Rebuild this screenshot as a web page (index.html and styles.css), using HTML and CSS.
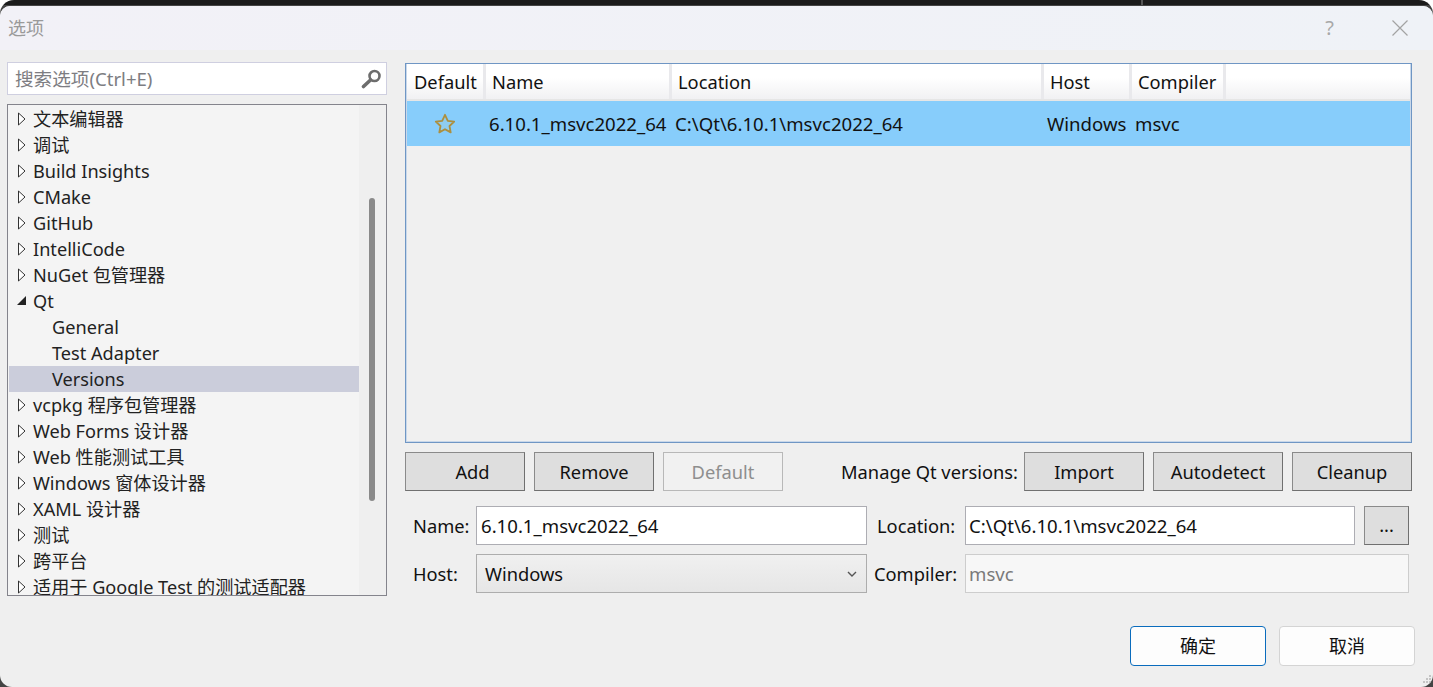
FILE: index.html
```html
<!DOCTYPE html>
<html lang="zh-CN">
<head>
<meta charset="utf-8">
<title>选项</title>
<link rel="stylesheet" href="styles.css">
</head>
<body>
<div class="frame">
  <div class="frame-tick"></div>
  <div class="window">
    <header class="titlebar">
      <span class="title">选项</span>
      <span class="help">?</span>
      <svg class="close" width="16" height="16" viewBox="0 0 16 16"><path d="M.5.5l15 15M15.500.5l-15 15" fill="none" stroke="#a3a3a3" stroke-width="1.200"/></svg>
    </header>
    <main class="content">
      <aside class="left">
        <div class="search">
          <span class="search-text">搜索选项(Ctrl+E)</span>
          <svg width="21" height="20" viewBox="0 0 21 20"><circle cx="13.500" cy="7" r="5" fill="none" stroke="#6d6d6d" stroke-width="2.600"/><path d="M9.500 11L2.500 17.500" stroke="#6d6d6d" stroke-width="3.600" stroke-linecap="round"/></svg>
        </div>
        <div class="tree">
          <div class="tree-list">
            <div class="node"><svg class="tri" viewBox="0 0 8 14"><path d="M.5 1v12l6.500-6z"/></svg>文本编辑器</div>
            <div class="node"><svg class="tri" viewBox="0 0 8 14"><path d="M.5 1v12l6.500-6z"/></svg>调试</div>
            <div class="node"><svg class="tri" viewBox="0 0 8 14"><path d="M.5 1v12l6.500-6z"/></svg>Build Insights</div>
            <div class="node"><svg class="tri" viewBox="0 0 8 14"><path d="M.5 1v12l6.500-6z"/></svg>CMake</div>
            <div class="node"><svg class="tri" viewBox="0 0 8 14"><path d="M.5 1v12l6.500-6z"/></svg>GitHub</div>
            <div class="node"><svg class="tri" viewBox="0 0 8 14"><path d="M.5 1v12l6.500-6z"/></svg>IntelliCode</div>
            <div class="node"><svg class="tri" viewBox="0 0 8 14"><path d="M.5 1v12l6.500-6z"/></svg>NuGet 包管理器</div>
            <div class="node"><svg class="tri-open" viewBox="0 0 10 14"><path d="M0 11h9V2z" fill="#222"/></svg>Qt</div>
            <div class="node child">General</div>
            <div class="node child">Test Adapter</div>
            <div class="node child selected">Versions</div>
            <div class="node"><svg class="tri" viewBox="0 0 8 14"><path d="M.5 1v12l6.500-6z"/></svg>vcpkg 程序包管理器</div>
            <div class="node"><svg class="tri" viewBox="0 0 8 14"><path d="M.5 1v12l6.500-6z"/></svg>Web Forms 设计器</div>
            <div class="node"><svg class="tri" viewBox="0 0 8 14"><path d="M.5 1v12l6.500-6z"/></svg>Web 性能测试工具</div>
            <div class="node"><svg class="tri" viewBox="0 0 8 14"><path d="M.5 1v12l6.500-6z"/></svg>Windows 窗体设计器</div>
            <div class="node"><svg class="tri" viewBox="0 0 8 14"><path d="M.5 1v12l6.500-6z"/></svg>XAML 设计器</div>
            <div class="node"><svg class="tri" viewBox="0 0 8 14"><path d="M.5 1v12l6.500-6z"/></svg>测试</div>
            <div class="node"><svg class="tri" viewBox="0 0 8 14"><path d="M.5 1v12l6.500-6z"/></svg>跨平台</div>
            <div class="node"><svg class="tri" viewBox="0 0 8 14"><path d="M.5 1v12l6.500-6z"/></svg>适用于 Google Test 的测试适配器</div>
          </div>
          <div class="scrollbar"><div class="thumb"></div></div>
        </div>
      </aside>
      <section class="right">
        <div class="table">
          <div class="thead">
            <div class="th w-default">Default</div>
            <div class="th w-name">Name</div>
            <div class="th w-location">Location</div>
            <div class="th w-host">Host</div>
            <div class="th w-compiler">Compiler</div>
            <div class="th w-rest"></div>
          </div>
          <div class="tr">
            <div class="td w-default star-cell">
              <svg width="22" height="22" viewBox="0 0 22 22"><path d="M11 1.800l2.800 6 6.400.8-4.700 4.400 1.200 6.400-5.700-3.200-5.700 3.200 1.200-6.400-4.700-4.400 6.400-.8z" fill="#8fcdf0" stroke="#ac8f3f" stroke-width="1.800" stroke-linejoin="round"/></svg>
            </div>
            <div class="td w-name">6.10.1_msvc2022_64</div>
            <div class="td w-location">C:\Qt\6.10.1\msvc2022_64</div>
            <div class="td w-host">Windows</div>
            <div class="td w-compiler">msvc</div>
          </div>
        </div>
        <div class="actions">
          <div class="btn add">Add</div>
          <div class="btn">Remove</div>
          <div class="btn disabled">Default</div>
          <span class="manage">Manage Qt versions:</span>
          <div class="btn">Import</div>
          <div class="btn wide">Autodetect</div>
          <div class="btn">Cleanup</div>
        </div>
        <div class="form">
          <div class="label l1">Name:</div>
          <div class="field">6.10.1_msvc2022_64</div>
          <div class="label l2">Location:</div>
          <div class="loc-wrap">
            <div class="field tight">C:\Qt\6.10.1\msvc2022_64</div>
            <div class="btn browse">...</div>
          </div>
          <div class="label l1">Host:</div>
          <div class="select">
            <span>Windows</span>
            <svg width="10" height="6" viewBox="0 0 10 6"><path d="M1 1l4 4 4-4" fill="none" stroke="#555" stroke-width="1.400"/></svg>
          </div>
          <div class="label l3">Compiler:</div>
          <div class="field tight readonly">msvc</div>
        </div>
      </section>
    </main>
    <footer class="footer">
      <div class="dlg primary">确定</div>
      <div class="dlg">取消</div>
    </footer>
    <svg class="grip" width="12" height="12" viewBox="0 0 12 12"><path d="M9 1h2v2H9zM6 4h2v2H6zM9 4h2v2H9zM3 7h2v2H3zM6 7h2v2H6zM9 7h2v2H9z" fill="#c4c4c4"/></svg>
  </div>
</div>
</body>
</html>
```
FILE: styles.css
```css
* { box-sizing: border-box; }
html, body { margin: 0; height: 100%; background: #fff; overflow: hidden; }
body { font: 18.3px/26px "Noto Sans", "Noto Sans CJK SC", sans-serif; color: #111; }
.frame { position: relative; height: 687px; background: linear-gradient(#1b1b1b 5px, #444 5px); border-radius: 14px 14px 0 0; padding-top: 6px; }
.frame-tick { position: absolute; left: 1141px; top: 0; width: 2px; height: 5px; background: #555; }
.window { position: relative; height: 681px; background: #efefef; border-radius: 10px 10px 12px 12px; overflow: hidden; }

.titlebar { height: 44px; display: flex; align-items: center; padding: 0 25px 0 8px; background: linear-gradient(90deg, #f2f1f7, #eff2f7); }
.title { flex: 1; color: #9a9a9a; font-size: 18px; }
.help { color: #a8a8a8; font-size: 20px; margin-right: 58px; }

.content { display: flex; padding: 12px 21px 0 7px; gap: 18px; }
.left { width: 380px; display: flex; flex-direction: column; gap: 9px; }
.search { height: 33px; display: flex; align-items: center; justify-content: space-between; padding: 0 4px 0 7px; background: #fff; border: 1px solid #cfcfe0; }
.search-text { color: #7d7d82; font-size: 18.6px; }

.tree { height: 492px; display: flex; border: 1px solid #84848c; background: #f4f4f4; overflow: hidden; font-size: 18.15px; }
.tree-list { width: 351px; padding: 1px 0 0 1px; }
.node { height: 26px; display: flex; align-items: center; padding-left: 9px; white-space: nowrap; color: #222; }
.tri { width: 8px; height: 14px; margin-right: 7px; flex: none; fill: #fff; stroke: #333; stroke-width: 1; }
.tri-open { width: 10px; height: 14px; margin: 0 6px 0 -1px; flex: none; }
.child { padding-left: 43px; }
.selected { background: #cbcddb; }
.scrollbar { flex: 1; background: #efefef; padding: 93px 0 0 10px; }
.thumb { width: 6px; height: 303px; border-radius: 3px; background: #8a8a8a; }

.right { width: 1007px; }
.table { margin-top: 1px; height: 380px; padding: 0 1px; border: 1px solid #6f96c4; background: #f0f0f0; box-shadow: inset 0 0 0 1px #c9d8ea; }
.thead { display: flex; height: 37px; background: linear-gradient(#fff 40%, #f1f1f3); border-bottom: 2px solid #e6e6e6; }
.th { padding-left: 6px; line-height: 36px; border-right: 3px solid #e9e9ec; white-space: nowrap; }
.tr { display: flex; height: 45px; background: #87cdfb; align-items: center; }
.td { padding-left: 3px; white-space: nowrap; font-size: 18.6px; }
.th.w-default { padding-left: 7px; }
.w-default { width: 79px; flex: none; }
.w-name { width: 186px; flex: none; }
.w-location { width: 372px; flex: none; }
.w-host { width: 88px; flex: none; }
.w-compiler { width: 94px; flex: none; }
.w-rest { flex: 1; border-right: 0; }
.star-cell { display: flex; justify-content: center; padding: 0 4px 0 0; }

.actions { display: flex; align-items: center; gap: 9px; margin-top: 9px; }
.btn { width: 120px; height: 39px; line-height: 38px; text-align: center; background: #dedede; border: 1px solid #707070; border-top-color: #8a8a8a; border-left-color: #8a8a8a; }
.btn.add { padding-left: 15px; }
.btn.wide { width: 130px; }
.btn.disabled { background: #f1f1f1; border-color: #b8b8b8; color: #8e8e8e; }
.manage { margin-left: auto; margin-right: -3px; white-space: nowrap; }

.form { display: grid; grid-template-columns: 71px 391px 98px 444px; grid-auto-rows: 39px; row-gap: 9px; margin-top: 15px; align-items: center; }
.label { white-space: nowrap; }
.l1 { padding-left: 8px; }
.l2 { padding-left: 10px; }
.l3 { padding-left: 7px; }
.field { height: 39px; line-height: 37px; padding-left: 4px; background: #fff; border: 1px solid #adadb3; white-space: nowrap; font-size: 18.6px; }
.field.tight { padding-left: 3px; }
.loc-wrap { display: flex; gap: 9px; }
.loc-wrap .field { width: 390px; }
.browse { width: 45px; line-height: 36px; }
.select { height: 39px; display: flex; align-items: center; justify-content: space-between; padding: 0 9px 0 8px; background: linear-gradient(#f0f0f0, #e6e6e6); border: 1px solid #adadad; }
.readonly { background: #f7f7f7; border-color: #cdcdcd; color: #7a7a7a; }

.footer { display: flex; justify-content: flex-end; gap: 13px; margin-top: 30px; padding-right: 18px; }
.dlg { width: 136px; height: 40px; line-height: 38px; text-align: center; font-size: 18px; background: #fdfdfd; border: 1px solid #d4d4d4; border-radius: 4px; }
.primary { border-color: #0a6cbd; }
.grip { position: absolute; right: 1px; bottom: 1px; }
```
